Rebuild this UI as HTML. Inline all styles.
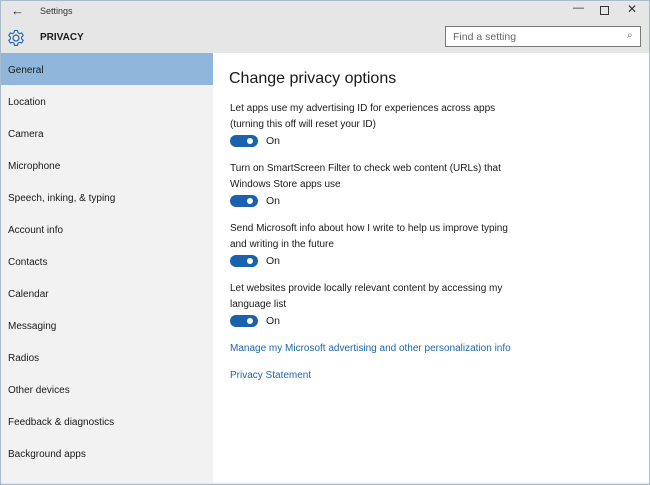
<!DOCTYPE html>
<html><head><style>
body{margin:0;width:650px;height:485px;overflow:hidden;font-family:"Liberation Sans",sans-serif;background:#e6e6e6;position:relative}
.a{position:absolute;white-space:nowrap}
.side{position:absolute;left:1px;top:53px;width:212px;height:430px;background:#f2f2f2}
.main{position:absolute;left:213px;top:53px;width:436px;height:430px;background:#fff}
.it{position:absolute;left:8px;font-size:10px;color:#1a1a1a}
.p{position:absolute;left:230px;font-size:10px;color:#1a1a1a;line-height:16px}
.tg{position:absolute;left:230px;width:28px;height:12px;border-radius:7px;background:#1a62ad}
.tg:after{content:"";position:absolute;right:5px;top:3px;width:6px;height:6px;border-radius:50%;background:#fff}
.on{position:absolute;left:266px;font-size:10.5px;color:#1a1a1a}
.lk{position:absolute;left:230px;font-size:10px;color:#1a67b0}
</style></head><body>
<div style="position:absolute;left:0;top:0;width:650px;height:485px;border:1px solid #a9bccd;box-sizing:border-box"></div>
<div class="a" style="left:11px;top:3px;font-size:13px;color:#333">←</div>
<div class="a" style="left:40px;top:6px;font-size:9px;color:#333">Settings</div>
<div class="a" style="left:573px;top:2px;font-size:11px;color:#333">—</div>
<div style="position:absolute;left:600px;top:6px;width:7px;height:7px;border:1px solid #333"></div>
<div class="a" style="left:627px;top:2px;font-size:12px;color:#333">✕</div>
<svg style="position:absolute;left:7px;top:29px" width="18" height="18" viewBox="0 0 18 18"><circle cx="9" cy="9" r="3" fill="none" stroke="#1a62ad" stroke-width="1.2"/><path d="M7.5 1.5h3l.5 2.2 1.6.9 2.1-.7 1.5 2.6-1.6 1.5v1.9l1.6 1.5-1.5 2.6-2.1-.7-1.6.9-.5 2.2h-3l-.5-2.2-1.6-.9-2.1.7-1.5-2.6 1.6-1.5V8l-1.6-1.5 1.5-2.6 2.1.7 1.6-.9z" fill="none" stroke="#1a62ad" stroke-width="1.1"/></svg>
<div class="a" style="left:40px;top:32px;font-size:10px;font-weight:bold;color:#1a1a1a">PRIVACY</div>
<div style="position:absolute;left:445px;top:26px;width:196px;height:21px;border:1px solid #7a7a7a;background:#fff;box-sizing:border-box"></div>
<div class="a" style="left:453px;top:31px;font-size:10.5px;color:#666">Find a setting</div>
<div class="a" style="left:627px;top:30px;font-size:10px;color:#666">⌕</div>
<div class="side"></div>
<div class="main"></div>
<div style="position:absolute;left:1px;top:53px;width:212px;height:32px;background:#8fb7dc"></div>
<div class="it" style="top:65px">General</div>
<div class="it" style="top:97px">Location</div>
<div class="it" style="top:129px">Camera</div>
<div class="it" style="top:161px">Microphone</div>
<div class="it" style="top:193px">Speech, inking, &amp; typing</div>
<div class="it" style="top:225px">Account info</div>
<div class="it" style="top:257px">Contacts</div>
<div class="it" style="top:289px">Calendar</div>
<div class="it" style="top:321px">Messaging</div>
<div class="it" style="top:353px">Radios</div>
<div class="it" style="top:385px">Other devices</div>
<div class="it" style="top:417px">Feedback &amp; diagnostics</div>
<div class="it" style="top:449px">Background apps</div>
<div class="a" style="left:229px;top:70px;font-size:16px;color:#1a1a1a">Change privacy options</div>
<div class="p" style="top:101px">Let apps use my advertising ID for experiences across apps<br>(turning this off will reset your ID)</div>
<div class="tg" style="top:135px"></div><div class="on" style="top:135px">On</div>
<div class="p" style="top:161px">Turn on SmartScreen Filter to check web content (URLs) that<br>Windows Store apps use</div>
<div class="tg" style="top:195px"></div><div class="on" style="top:195px">On</div>
<div class="p" style="top:221px">Send Microsoft info about how I write to help us improve typing<br>and writing in the future</div>
<div class="tg" style="top:255px"></div><div class="on" style="top:255px">On</div>
<div class="p" style="top:281px">Let websites provide locally relevant content by accessing my<br>language list</div>
<div class="tg" style="top:315px"></div><div class="on" style="top:315px">On</div>
<div class="lk" style="top:343px">Manage my Microsoft advertising and other personalization info</div>
<div class="lk" style="top:370px">Privacy Statement</div>
</body></html>
